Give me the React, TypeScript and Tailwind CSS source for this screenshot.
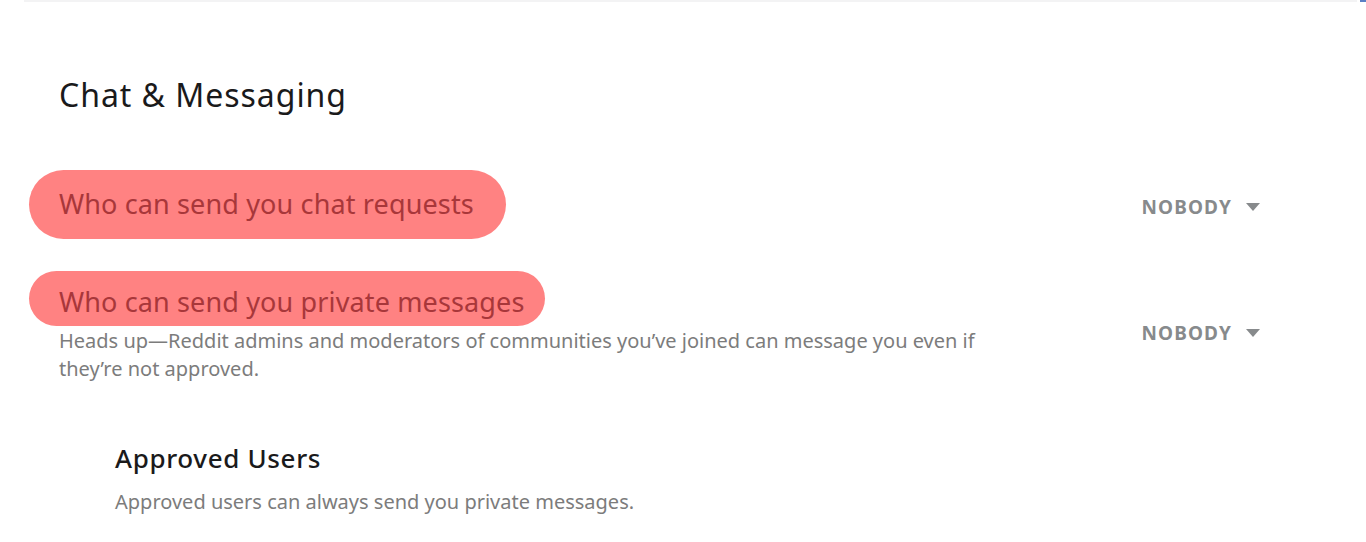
import React from 'react';

const font = { fontFamily: '"Noto Sans", "Open Sans", sans-serif' };

function Caret() {
  return (
    <svg width="14" height="8" viewBox="0 0 14 8" className="ml-[14px]">
      <path d="M0 0 H14 L7 8 Z" fill="#878a8c" />
    </svg>
  );
}

function Select({ className = '' }: { className?: string }) {
  return (
    <button className={`flex h-[24px] items-center text-[19px] font-bold tracking-[0.06em] text-[#878a8c] ${className}`}>
      NOBODY
      <Caret />
    </button>
  );
}

export default function App() {
  return (
    <div className="min-h-screen bg-white" style={font}>
      <div className="flex h-[3px]">
        <div className="ml-[24px] h-[2px] flex-1 bg-[#f3f3f4]" />
        <div className="ml-[3px] h-[2px] w-[6px] bg-[#5b7fc4]" />
      </div>

      <div className="pl-[59px] pr-[106px] pt-[72px]">
        <h2 className="text-[32px] leading-[40px] tracking-[0.03em] text-[#1a1a1b]">Chat &amp; Messaging</h2>

        {/* chat requests */}
        <div className="mt-[55px] flex items-center justify-between">
          <div className="-ml-[30px] flex h-[69px] items-center rounded-full bg-[#ff8282] pl-[30px] pr-[32px]">
            <span className="text-[27px] tracking-[0.005em] text-[#a8373a]">Who can send you chat requests</span>
          </div>
          <Select className="mt-[5px]" />
        </div>

        {/* private messages */}
        <div className="mt-[32px] flex items-start justify-between">
          <div>
            <div className="-ml-[30px] flex h-[55px] w-fit items-center rounded-full bg-[#ff8282] pl-[30px] pr-[20px] pt-[6px]">
              <span className="text-[27px] leading-[36px] tracking-[0.005em] text-[#a8373a]">Who can send you private messages</span>
            </div>
            <p className="mt-[1px] max-w-[930px] text-[20px] leading-[28px] text-[#7c7c7c]">
              Heads up—Reddit admins and moderators of communities you’ve joined can message you even if they’re not approved.
            </p>
          </div>
          <Select className="mt-[50px]" />
        </div>

        {/* approved users */}
        <div className="ml-[56px] mt-[59px]">
          <h3 className="text-[26px] font-medium leading-[32px] tracking-[0.025em] text-[#1a1a1b]">Approved Users</h3>
          <p className="mt-[14px] text-[20px] leading-[28px] text-[#7c7c7c]">
            Approved users can always send you private messages.
          </p>
        </div>
      </div>
    </div>
  );
}
